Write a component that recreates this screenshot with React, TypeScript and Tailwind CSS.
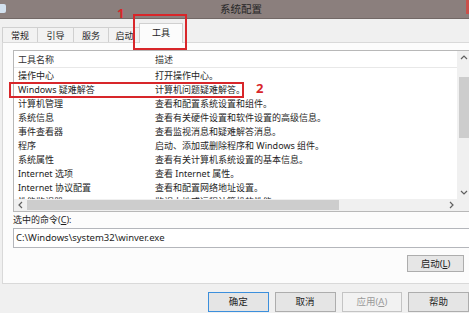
import React from 'react';

const rows: [string, string][] = [
  ['操作中心', '打开操作中心。'],
  ['Windows 疑难解答', '计算机问题疑难解答。'],
  ['计算机管理', '查看和配置系统设置和组件。'],
  ['系统信息', '查看有关硬件设置和软件设置的高级信息。'],
  ['事件查看器', '查看监视消息和疑难解答消息。'],
  ['程序', '启动、添加或删除程序和 Windows 组件。'],
  ['系统属性', '查看有关计算机系统设置的基本信息。'],
  ['Internet 选项', '查看 Internet 属性。'],
  ['Internet 协议配置', '查看和配置网络地址设置。'],
  ['性能监视器', '监视本地或远程计算机的性能。'],
];

const tabs: { label: string; w: string }[] = [
  { label: '常规', w: 'w-[35px]' },
  { label: '引导', w: 'w-[36px]' },
  { label: '服务', w: 'w-[35px]' },
  { label: '启动', w: 'w-[32px]' },
];

const Chevron = ({ dir }: { dir: 'up' | 'down' | 'left' | 'right' }) => {
  const d = {
    up: 'M1 5 L4 2 L7 5',
    down: 'M1 2 L4 5 L7 2',
    left: 'M5 1 L2 4 L5 7',
    right: 'M3 1 L6 4 L3 7',
  }[dir];
  return (
    <svg width="8" height="8" viewBox="0 0 8 8" fill="none">
      <path d={d} stroke="#606060" strokeWidth="1.2" />
    </svg>
  );
};

const Button = ({ children, className = '' }: { children: React.ReactNode; className?: string }) => (
  <div
    className={`flex items-center justify-center border text-[9.5px] leading-none ${className}`}
  >
    {children}
  </div>
);

export default function App() {
  return (
    <div className="relative h-[313px] w-[469px] overflow-hidden bg-[#f0f0f0] font-['Noto_Sans','Noto_Sans_CJK_SC',sans-serif] text-[#1e1e1e]">
      {/* title bar */}
      <div className="flex h-[19px] items-start border-b border-[#726866] bg-[#8b7f7d]">
        <div className="mt-[4px] h-[9px] w-[6px] rounded-r-[2px] bg-[#d3e1ef]" />
        <div className="ml-[214px] mt-[2px] text-[10.5px] leading-[14px] text-[#262626]">系统配置</div>
        <div className="ml-auto h-[14px] w-[3px] bg-[#c9504b]" />
      </div>

      {/* tabs */}
      <div className="flex h-[23px] items-end pl-[2px]">
        {tabs.map((t) => (
          <div
            key={t.label}
            className={`flex h-[15px] items-center justify-center border-l border-t border-[#d0d0d0] bg-[#f2f2f2] text-[9px] leading-none ${t.w}`}
          >
            {t.label}
          </div>
        ))}
        <div className="relative z-10 -mb-px -ml-px flex h-[20px] w-[44px] items-center justify-center border-x border-t border-[#d0d0d0] bg-[#fcfcfc] pb-[2px] text-[9px] leading-none">
          工具
        </div>
      </div>

      {/* tab panel */}
      <div className="ml-[2px] h-[242px] w-[480px] border border-[#d9d9d9] bg-[#fcfcfc] pl-[10px] pt-[7px]">
        <div className="flex h-[162px] w-[458px] flex-col border border-[#b8b8b8] bg-white">
          <div className="flex h-[148px]">
            <div className="flex-1 overflow-hidden">
              <div className="flex h-[17px] items-center border-b border-[#e8e8e8] text-[9px] leading-none text-[#333]">
                <div className="w-[141px] pl-[4px]">工具名称</div>
                <div>描述</div>
              </div>
              {rows.map(([name, desc]) => (
                <div key={name} className="flex h-[14px] shrink-0 items-center whitespace-nowrap text-[9px] leading-none">
                  <div className="w-[141px] pl-[4px]">{name}</div>
                  <div>{desc}</div>
                </div>
              ))}
            </div>
            {/* vertical scrollbar */}
            <div className="flex w-[13px] flex-col items-center bg-[#f0f0f0]">
              <div className="flex h-[13px] items-center justify-center">
                <Chevron dir="up" />
              </div>
              <div className="h-[13px]" />
              <div className="h-[61px] w-[10px] bg-[#cdcdcd]" />
              <div className="flex-1" />
              <div className="flex h-[13px] items-center justify-center">
                <Chevron dir="down" />
              </div>
            </div>
          </div>
          {/* horizontal scrollbar */}
          <div className="flex h-[12px] bg-[#f0f0f0]">
            <div className="flex w-[13px] items-center justify-center">
              <Chevron dir="left" />
            </div>
            <div className="h-[10px] w-[312px] self-center bg-[#cdcdcd]" />
            <div className="flex-1" />
            <div className="flex w-[13px] items-center justify-center">
              <Chevron dir="right" />
            </div>
            <div className="w-[13px] bg-[#f0f0f0]" />
          </div>
        </div>

        <div className="mt-[2px] text-[9px] leading-[12px]">
          选中的命令(<span className="underline">C</span>):
        </div>
        <div className="mt-[2px] flex h-[20px] w-[470px] items-center border border-[#b4b6bb] bg-white pl-[2px] text-[9.5px] leading-none">
          C:\Windows\system32\winver.exe
        </div>
        <Button className="ml-[394px] mt-[7px] h-[17px] w-[57px] border-[#adadad] bg-[#e6e6e6]">
          启动(<span className="underline">L</span>)
        </Button>
      </div>

      {/* dialog buttons */}
      <div className="mt-[8px] flex gap-[6px] pl-[208px]">
        <Button className="h-[20px] w-[65px] border-[#3c8fdc] bg-[#e5e5e5]">确定</Button>
        <Button className="h-[20px] w-[65px] border-[#adadad] bg-[#e5e5e5]">取消</Button>
        <Button className="h-[20px] w-[65px] border-[#c4c4c4] bg-[#f2f2f2] text-[#9a9a9a]">
          应用(<span className="underline">A</span>)
        </Button>
        <Button className="h-[20px] w-[65px] border-[#adadad] bg-[#e5e5e5]">帮助</Button>
      </div>

      {/* red annotations */}
      <div className="absolute left-[117px] top-[7px] text-[13px] font-bold leading-none text-[#d8262a]">1</div>
      <div className="absolute left-[133px] top-[14px] h-[36px] w-[54px] border-2 border-[#d8262a]" />
      <div className="absolute left-[9px] top-[82px] h-[16px] w-[235px] border-2 border-[#d8262a]" />
      <div className="absolute left-[256px] top-[82px] text-[13px] font-bold leading-none text-[#d8262a]">2</div>
    </div>
  );
}
